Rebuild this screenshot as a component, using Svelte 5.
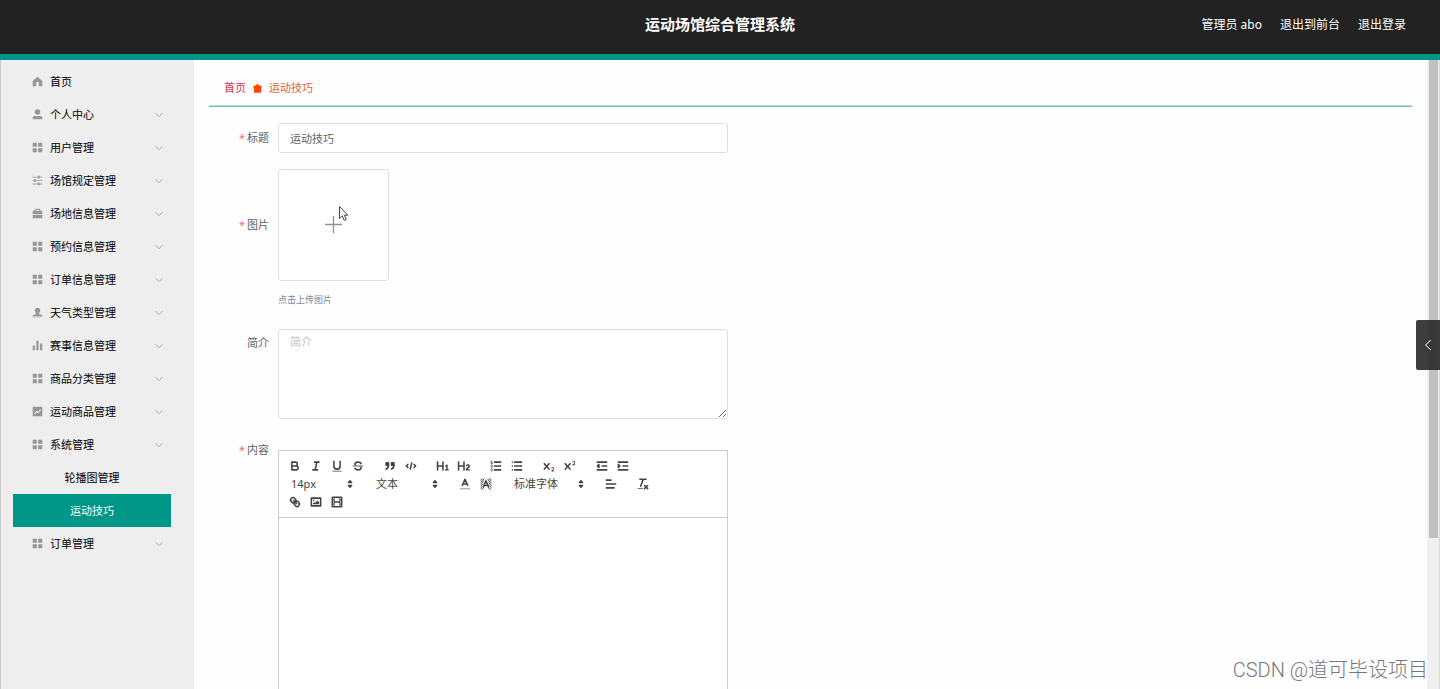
<script>
  const menu = [
    { icon: 'home', label: '首页' },
    { icon: 'user', label: '个人中心', sub: true },
    { icon: 'grid', label: '用户管理', sub: true },
    { icon: 'sliders', label: '场馆规定管理', sub: true },
    { icon: 'case', label: '场地信息管理', sub: true },
    { icon: 'grid', label: '预约信息管理', sub: true },
    { icon: 'grid', label: '订单信息管理', sub: true },
    { icon: 'stamp', label: '天气类型管理', sub: true },
    { icon: 'bars', label: '赛事信息管理', sub: true },
    { icon: 'grid', label: '商品分类管理', sub: true },
    { icon: 'trend', label: '运动商品管理', sub: true },
    { icon: 'grid', label: '系统管理', sub: true, children: ['轮播图管理', '运动技巧'] },
    { icon: 'grid', label: '订单管理', sub: true }
  ];
  const active = '运动技巧';

  const glyphs = {
    home: '<path d="M8 1 1 7.300V15h5v-4.600a2 2 0 0 1 4 0V15h5V7.300z"/>',
    user: '<circle cx="8" cy="4.500" r="4"/><path d="M1 15v-2.500Q1 10 4 10h8q3 0 3 2.500V15z"/>',
    grid: '<path d="M1 1h6v6H1zM9 1h6v6H9zM1 9h6v6H1zM9 9h6v6H9z"/>',
    sliders: '<path d="M1 2.500h14v1.200H1zM1 7.500h14v1.200H1zM1 12.500h14v1.200H1z"/><path d="M8.500 1h2.500v4H8.500zM3 6h2.500v4H3zM8.500 11h2.500v4H8.500z"/>',
    case: '<path fill-rule="evenodd" d="M4 4V1h8v3h3v5H1V4zm1.500 0h5V2.500h-5zM1 10.300h14V15H1z"/>',
    stamp: '<path d="M8 1a4 4 0 0 1 4 4c0 2-2 3-2 5.500l5 1V13H1v-1.500l5-1C6 8 4 7 4 5a4 4 0 0 1 4-4zM1 13.700h14V15H1z"/>',
    bars: '<path d="M1 8h3.300v7H1zM6.300 1h3.300v14H6.300zM11.700 5H15v10h-3.300z"/>',
    trend: '<path fill-rule="evenodd" d="M1 1h14v14H1zm2 10 .9 1 3.100-3 1.500 1.500L13 6l-.9-.9-3.600 3.400L7 7z"/>'
  };

  const X = '<path class="f" d="M9.650,5.241a1,1,0,0,0-1.409.108L6,7.964,3.759,5.349A1,1,0,0,0,2.192,6.592Q2.215,6.621,2.241,6.649L4.684,9.500,2.241,12.350A1,1,0,0,0,3.710,13.707q0.026-.028.049-0.057L6,11.036,8.241,13.650a1,1,0,1,0,1.567-1.243Q9.785,12.378,9.759,12.350L7.316,9.500,9.759,6.651A1,1,0,0,0,9.650,5.241Z"/>';
  const arrows = '<polygon class="s b" points="7 11 9 13 11 11"/><polygon class="s b" points="7 7 9 5 11 7"/>';

  const tools = [
    [
      { t: '粗体', d: '<path class="s" d="M5,4H9.500A2.500,2.500,0,0,1,9.500,9H5ZM5,9h5.500A2.500,2.500,0,0,1,10.500,14H5Z"/>' },
      { t: '斜体', d: '<path class="s" d="M7,4H13M5,14H11M8,14L10,4"/>' },
      { t: '下划线', d: '<path class="s" d="M5,3V9a4,4,0,0,0,8,0V3"/><rect class="f" x="3" y="15" width="12" height="1" rx=".5"/>' },
      { t: '删除线', d: '<path class="s n" d="M2.500,9H15.500"/><path class="f" d="M9.007,8C6.542,7.791,6,7.519,6,6.500,6,5.792,7.283,5,9,5c1.571,0,2.765.679,2.969,1.309a1,1,0,0,0,1.900-.617C13.356,4.106,11.354,3,9,3,6.200,3,4,4.538,4,6.500a3.200,3.200,0,0,0,.5,1.843ZM8.984,10C11.457,10.208,12,10.479,12,11.500c0,.708-1.283,1.500-3,1.500-1.571,0-2.765-.679-2.969-1.309a1,1,0,1,0-1.900.617C4.644,13.894,6.646,15,9,15c2.800,0,5-1.538,5-3.500a3.200,3.200,0,0,0-.5-1.843Z"/>' }
    ],
    [
      { t: '引用', d: '<path class="s b" d="M4,5h3v3H4ZM11,5h3v3H11Z"/><path class="s b" d="M7,8c0,4.031-3,5-3,5M14,8c0,4.031-3,5-3,5"/>' },
      { t: '代码', d: '<path class="s" d="M5,7L3,9L5,11M13,7L15,9L13,11M10,5L8,13"/>' }
    ],
    [
      { t: '一级标题', d: '<path class="f" d="M10,4V14a1,1,0,0,1-2,0V10H3v4a1,1,0,0,1-2,0V4A1,1,0,0,1,3,4V8H8V4a1,1,0,0,1,2,0ZM16.068,13.209H14.990V7.599a.54.54,0,0,0-.605-.605h-.627a1.011,1.011,0,0,0-.748.297L11.645,8.566a.543.543,0,0,0-.022.858l.286.308a.539.539,0,0,0,.847.033l.34-.44V13.209H12.041a.54.54,0,0,0-.605.605v.44a.54.54,0,0,0,.605.605h4.027a.54.54,0,0,0,.605-.605v-.44A.54.54,0,0,0,16.068,13.209Z"/>' },
      { t: '二级标题', d: '<path class="f" d="M16.740,13.814v.44a.54.54,0,0,1-.605.605H11.855a.584.584,0,0,1-.649-.605V14.013c0-2.905,3.400-3.422,3.400-4.555a.777.777,0,0,0-.847-.781,1.177,1.177,0,0,0-.836.385c-.275.264-.561.374-.858.132l-.429-.341c-.308-.242-.385-.518-.154-.814a2.972,2.972,0,0,1,2.454-1.177,2.454,2.454,0,0,1,2.684,2.409c0,2.453-3.179,2.927-3.278,3.938h2.794A.54.54,0,0,1,16.740,13.814ZM9,3A1,1,0,0,0,8,4V8H3V4A1,1,0,0,0,1,4V14a1,1,0,0,0,2,0V10H8v4a1,1,0,0,0,2,0V4A1,1,0,0,0,9,3Z"/>' }
    ],
    [
      { t: '有序列表', d: '<path class="s" d="M7,4H15M7,9H15M7,14H15"/><path class="s n" d="M2.500,5.500H4.500M3.500,5.500V2.500L2.500,3M4.500,10.500h-2c0-.234,1.850-1.076,1.850-2.234A.959.959,0,0,0,2.500,8.156M2.500,14.846a.959.959,0,0,0,1.850-.109A.7.7,0,0,0,3.750,14a.688.688,0,0,0,.6-.736,.959.959,0,0,0-1.850-.109"/>' },
      { t: '无序列表', d: '<path class="s" d="M6,4H15M6,9H15M6,14H15M3,4h.01M3,9h.01M3,14h.01"/>' }
    ],
    [
      { t: '下标', d: X + '<path class="f" d="M15.500,15H13.861a3.858,3.858,0,0,0,1.914-2.975,1.800,1.800,0,0,0-1.600-1.751A1.921,1.921,0,0,0,12.021,11.700a.5.5,0,1,0,.957.291,.914.914,0,0,1,1.053-.725,.81.81,0,0,1,.744.762c0,1.076-1.170,1.870-1.940,2.431A1.456,1.456,0,0,0,12,15.500a.5.5,0,0,0,.5.5h3A.5.5,0,0,0,15.500,15Z"/>' },
      { t: '上标', d: X + '<path class="f" d="M15.500,7H13.861a4.015,4.015,0,0,0,1.914-2.975,1.800,1.800,0,0,0-1.600-1.751A1.922,1.922,0,0,0,12.021,3.700a.5.5,0,1,0,.957.291,.917.917,0,0,1,1.053-.725,.81.81,0,0,1,.744.762c0,1.077-1.164,1.925-1.934,2.486A1.423,1.423,0,0,0,12,7.500a.5.5,0,0,0,.5.5h3A.5.5,0,0,0,15.500,7Z"/>' }
    ],
    [
      { t: '减少缩进', d: '<path class="s" d="M3,14H15M3,4H15M9,9H15"/><path class="s b" d="M5,7V11L3,9Z"/>' },
      { t: '增加缩进', d: '<path class="s" d="M3,14H15M3,4H15M9,9H15"/><path class="s b" d="M3,7V11L5,9Z"/>' }
    ],
    [{ t: '字号', pick: '14px' }],
    [{ t: '段落', pick: '文本' }],
    [
      { t: '文字颜色', d: '<path class="s" opacity=".4" d="M3,15H15"/><path class="s" d="M5.500,11L9,3L12.500,11M11.630,9H6.380"/>' },
      { t: '背景颜色', d: '<defs><pattern id="dots" width="2.600" height="2.600" patternUnits="userSpaceOnUse"><path fill="#444" d="M0 0h1.300v1.300H0zM1.300 1.300h1.300v1.300H1.300z"/></pattern></defs><path fill="url(#dots)" d="M2 2h5.500L3.500 14H6V16H2zM10.500 2H16v14h-4v-2h2.500z"/><path class="s" d="M5.500,13L9,5L12.500,13M11.630,11H6.380"/>' }
    ],
    [{ t: '字体', pick: '标准字体', wide: true }],
    [{ t: '对齐', d: '<path class="s" d="M3,9H15M3,14H13M3,4H9"/>' }],
    [{ t: '清除格式', d: '<path class="s" d="M5,3H13M6,12L9.350,3M11,11L15,15M15,11L11,15"/><rect class="f" x="2" y="14" width="7" height="1" rx=".5"/>' }],
    [
      { t: '链接', d: '<path class="s" d="M7,7L11,11M8.900,4.577a3.476,3.476,0,0,1,.36,4.679A3.476,3.476,0,0,1,4.577,8.900C3.185,7.500,2.035,6.400,4.217,4.217S7.500,3.185,8.900,4.577ZM13.423,9.100a3.476,3.476,0,0,0-4.679-.36,3.476,3.476,0,0,0,.36,4.679c1.392,1.392,2.500,2.542,4.679.36S14.815,10.500,13.423,9.100Z"/>' },
      { t: '图片', d: '<rect class="s" x="3" y="4" width="12" height="10"/><circle class="f" cx="6" cy="7" r="1"/><path class="f" d="M5 12V11L7 9L8 10L11 7L13 9V12Z"/>' },
      { t: '视频', d: '<rect class="s" x="3" y="3" width="12" height="12"/><path class="f" d="M5 3h1v12H5zM12 3h1v12h-1zM5 8h8v2H5zM3 5h3v1H3zM3 7h3v1H3zM3 10h3v1H3zM3 12h3v1H3zM12 5h3v1h-3zM12 7h3v1h-3zM12 10h3v1h-3zM12 12h3v1h-3z"/>' }
    ]
  ];

  let title = $state('运动技巧');
  let intro = $state('');
</script>

<div class="app">
  <header>
    <span class="side"></span>
    <h1>运动场馆综合管理系统</h1>
    <nav class="side account" aria-label="账户">
      <span>管理员 abo</span>
      <a href="#front">退出到前台</a>
      <a href="#logout">退出登录</a>
    </nav>
  </header>

  <div class="body">
    <aside>
      <ul>
        {#each menu as item}
          <li>
            <a class="item" href="#menu">
              <svg class="glyph" viewBox="0 0 16 16" aria-hidden="true">{@html glyphs[item.icon]}</svg>
              <span>{item.label}</span>
              {#if item.sub}
                <svg class="caret" viewBox="0 0 8 8" aria-hidden="true"><path d="M.5 2.200 4 5.700 7.500 2.200" /></svg>
              {/if}
            </a>
            {#if item.children}
              <ul>
                {#each item.children as child}
                  <li><a class="child" class:active={child === active} href="#menu">{child}</a></li>
                {/each}
              </ul>
            {/if}
          </li>
        {/each}
      </ul>
    </aside>

    <main>
      <nav class="crumbs" aria-label="位置">
        <a href="#home">首页</a>
        <svg viewBox="0 0 10 10" aria-hidden="true"><path d="M.5 2h2.800V1.200L5 0l1.700 1.200V2h2.800v2.500H9V9.700H1V4.500H.5z" /></svg>
        <span>运动技巧</span>
      </nav>

      <form>
        <div class="row">
          <label class="req" for="title">标题</label>
          <input id="title" type="text" bind:value={title} />
        </div>
        <div class="row">
          <label class="req photo" for="upload">图片</label>
          <div class="field">
            <button id="upload" class="upload" type="button" aria-label="上传">
              <svg viewBox="0 0 18 18" aria-hidden="true"><path d="M8.500 0v17M0 8.500h17" /></svg>
              <svg class="pointer" viewBox="0 0 12 18" aria-hidden="true"><path d="M1.500 1.500v12l2.800-2.600 2 4.600 2-1-2-4.300h3.500z" /></svg>
            </button>
            <p>点击上传图片</p>
          </div>
        </div>
        <div class="row intro">
          <label for="intro">简介</label>
          <textarea id="intro" placeholder="简介" bind:value={intro}></textarea>
        </div>
        <div class="row last">
          <label class="req" for="content">内容</label>
          <div class="editor">
            <div class="toolbar" role="toolbar" aria-label="编辑">
              {#each tools as group}
                <span class="group">
                  {#each group as tool}
                    {#if tool.pick}
                      <button type="button" class="pick" class:wide={tool.wide} title={tool.t}>
                        {tool.pick}
                        <svg viewBox="0 0 18 18" aria-hidden="true">{@html arrows}</svg>
                      </button>
                    {:else}
                      <button type="button" class="tool" title={tool.t} aria-label={tool.t}>
                        <svg viewBox="0 0 18 18" aria-hidden="true">{@html tool.d}</svg>
                      </button>
                    {/if}
                  {/each}
                </span>
              {/each}
            </div>
            <div id="content" class="sheet" contenteditable="true" role="textbox" tabindex="0" aria-label="内容"></div>
          </div>
        </div>
      </form>
    </main>

    <div class="track" aria-hidden="true"><div class="thumb"></div></div>
  </div>

  <button class="drawer" type="button" aria-label="展开">
    <svg viewBox="0 0 8 12" aria-hidden="true"><path d="M7 1 1.500 6 7 11" /></svg>
  </button>
  <div class="mark">CSDN @道可毕设项目</div>
</div>

<style>
  :global(body) {
    background: #fefefe;
  }
  .app {
    position: relative;
    display: flex;
    flex-direction: column;
    height: 100vh;
    overflow: hidden;
    font: 11px/16px "Noto Sans", "Noto Sans CJK SC", sans-serif;
    color: #606266;
  }
  a,
  button,
  input,
  textarea {
    font: inherit;
    color: inherit;
    text-decoration: none;
  }
  ul {
    list-style: none;
    margin: 0;
    padding: 0;
  }
  header {
    flex: none;
    display: flex;
    align-items: center;
    box-sizing: border-box;
    height: 60px;
    padding: 0 34px 5px;
    background: #222;
    border-bottom: 6px solid #009688;
    color: #fff;
    font-size: 12px;
  }
  h1 {
    margin: 0 0 2px;
    font-size: 15px;
    font-weight: 700;
    line-height: 20px;
  }
  .side {
    flex: 1;
  }
  .account {
    display: flex;
    justify-content: flex-end;
    gap: 18px;
  }
  .body {
    flex: 1;
    min-height: 0;
    display: flex;
  }
  aside {
    flex: none;
    box-sizing: border-box;
    width: 194px;
    padding: 5px 23px 0 12px;
    background: #eee;
    border-left: 1px solid #ccc;
    color: #000;
  }
  .item {
    display: flex;
    align-items: center;
    gap: 7px;
    height: 33px;
    padding: 0 8px 0 19px;
  }
  .glyph {
    width: 11px;
    height: 11px;
    fill: #98959b;
  }
  .caret {
    width: 8px;
    height: 8px;
    margin-left: auto;
    fill: none;
    stroke: #aaa;
  }
  .child {
    display: block;
    line-height: 33px;
    text-align: center;
  }
  .active {
    background: #009688;
    color: #fff;
  }
  main {
    flex: 1;
    min-width: 0;
    display: flex;
    flex-direction: column;
    padding: 10px 15px 0;
  }
  .crumbs {
    flex: none;
    display: flex;
    align-items: center;
    gap: 7px;
    box-sizing: border-box;
    height: 37px;
    padding: 0 15px;
    border-bottom: 1px solid #80bcb8;
    box-shadow: inset 0 -1px #a8e0dc;
    color: #e0632e;
  }
  .crumbs a {
    color: #dc3050;
  }
  .crumbs svg {
    width: 9px;
    height: 9px;
    fill: #ff4500;
  }
  form {
    flex: 1;
    min-height: 0;
    display: flex;
    flex-direction: column;
    padding-top: 16px;
  }
  .row {
    display: flex;
    gap: 9px;
    max-width: 519px;
    margin-bottom: 16px;
  }
  label {
    flex: none;
    width: 60px;
    line-height: 30px;
    text-align: right;
  }
  .req::before {
    content: "*";
    margin-right: 2px;
    color: #f56c6c;
  }
  .photo {
    line-height: 111px;
  }
  input,
  textarea,
  .upload {
    box-sizing: border-box;
    border: 1px solid #dcdfe6;
    border-radius: 3px;
    background: #fff;
    outline: none;
  }
  input {
    flex: 1;
    height: 30px;
    padding: 0 11px;
  }
  .field {
    flex: 1;
  }
  .upload {
    position: relative;
    display: grid;
    place-items: center;
    width: 111px;
    height: 112px;
    padding: 0;
  }
  .upload svg {
    width: 18px;
    height: 18px;
    fill: none;
    stroke: #8c939d;
    stroke-width: 1.3;
  }
  .upload .pointer {
    position: absolute;
    left: 59px;
    top: 35px;
    width: 12px;
    fill: #fff;
    stroke: #444;
    stroke-width: 1;
  }
  p {
    margin: 11px 0 0;
    font-size: 9px;
    color: #7c8794;
  }
  .intro {
    margin: 5px 0 31px;
  }
  textarea {
    flex: 1;
    height: 90px;
    padding: 4px 11px;
    resize: vertical;
  }
  .intro label {
    line-height: 28px;
  }
  textarea::placeholder {
    color: #c0c4cc;
  }
  .last {
    flex: 1;
    min-height: 0;
    margin: 0;
  }
  .last label {
    margin-top: -8px;
    line-height: 16px;
  }
  .editor {
    flex: 1;
    display: flex;
    flex-direction: column;
    border: 1px solid #ccc;
    border-bottom: 0;
    background: #fff;
  }
  .toolbar {
    display: flex;
    flex-wrap: wrap;
    padding: 6px 6px 6px 5px;
    border-bottom: 1px solid #ccc;
    color: #444;
  }
  .group {
    display: flex;
    margin-right: 11px;
  }
  .tool,
  .pick {
    display: flex;
    align-items: center;
    justify-content: center;
    width: 21px;
    height: 18px;
    padding: 0;
    border: 0;
    background: none;
  }
  .pick {
    justify-content: space-between;
    width: 74px;
    padding: 0 1px 0 7px;
  }
  .wide {
    width: 82px;
  }
  .toolbar svg {
    width: 14px;
    height: 14px;
  }
  .toolbar :global(.s) {
    fill: none;
    stroke: #444;
    stroke-width: 2;
    stroke-linecap: round;
    stroke-linejoin: round;
  }
  .toolbar :global(.n) {
    stroke-width: 1;
  }
  .toolbar :global(.f),
  .toolbar :global(.b) {
    fill: #444;
  }
  .sheet {
    flex: 1;
    outline: none;
  }
  .track {
    flex: none;
    box-sizing: border-box;
    width: 13px;
    padding: 0 1px 0 2px;
    background: #f0f0f0;
    border-right: 1px solid #d8d8d8;
  }
  .thumb {
    height: 76%;
    background: #c1c1c1;
  }
  .drawer {
    position: absolute;
    right: 0;
    top: 320px;
    display: grid;
    place-items: center;
    width: 24px;
    height: 50px;
    padding: 0;
    border: 0;
    border-radius: 2px 0 0 2px;
    background: rgba(40, 40, 40, 0.9);
  }
  .drawer svg {
    width: 8px;
    height: 12px;
    fill: none;
    stroke: #fff;
  }
  .mark {
    position: absolute;
    right: 12px;
    bottom: 7px;
    font: 300 20px/24px Roboto, "Noto Sans CJK SC", sans-serif;
    color: #777;
    text-shadow: -1px -1px #fff;
  }
</style>
